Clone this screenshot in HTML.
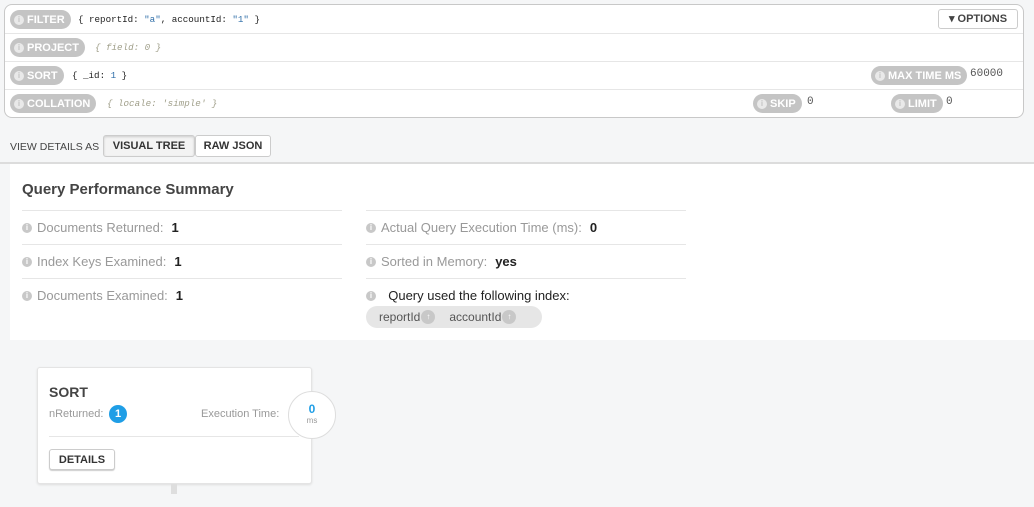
<!DOCTYPE html>
<html><head><style>
*{box-sizing:border-box;margin:0;padding:0}
body{width:1034px;height:507px;background:#f5f6f7;font-family:"Liberation Sans",sans-serif;position:relative;overflow:hidden}
.abs{position:absolute}
.bar{left:4px;top:4px;width:1020px;height:114px;background:#fff;border:1px solid #c8c8c8;border-radius:8px}
.line{position:absolute;height:1px;background:#e6e6e6}
.pill{position:absolute;height:19px;border-radius:10px;background:#c4c4c4;color:#fff;font-weight:bold;font-size:11px;padding:0 6px 0 4px;white-space:nowrap;display:flex;align-items:center}
.pill i{display:block;width:10px;height:10px;border-radius:50%;background:#e9e9e9;color:#c4c4c4;font-style:normal;font-size:8px;line-height:10px;text-align:center;margin-right:3px}
.mono{position:absolute;font-family:"Liberation Mono",monospace;font-size:9.2px;color:#222;white-space:nowrap}
.it{font-style:italic;color:#a09f8a}
.blue{color:#2f6ea8}
.lbl{position:absolute;font-size:13px;color:#999;white-space:nowrap;display:flex;align-items:center}
.lbl b{color:#222;margin-left:8px}
.ic{display:inline-block;width:10px;height:10px;border-radius:50%;background:#c8c8c8;color:#fff;font-size:8px;line-height:10px;text-align:center;font-weight:bold;margin-right:5px}
.btn{position:absolute;border:1px solid #ccc;border-radius:3px;background:#fff;font-size:11px;font-weight:bold;color:#333;text-align:center}
</style></head><body>
<div class="abs bar">
 <div class="line" style="left:0;right:0;top:28px"></div>
 <div class="line" style="left:0;right:0;top:56px"></div>
 <div class="line" style="left:0;right:0;top:84px"></div>
</div>
<div class="pill" style="left:10px;top:10px"><i>i</i>FILTER</div>
<div class="mono" style="left:78px;top:14px">{ reportId: <span class="blue">"a"</span>, accountId: <span class="blue">"1"</span> }</div>
<div class="btn" style="left:938px;top:9px;width:80px;height:20px;line-height:19px;font-size:11px;color:#444">▾ OPTIONS</div>
<div class="pill" style="left:10px;top:38px"><i>i</i>PROJECT</div>
<div class="mono it" style="left:95px;top:42px">{ field: 0 }</div>
<div class="pill" style="left:10px;top:66px"><i>i</i>SORT</div>
<div class="mono" style="left:72px;top:70px">{ _id: <span class="blue">1</span> }</div>
<div class="pill" style="left:871px;top:66px"><i>i</i>MAX TIME MS</div>
<div class="mono" style="left:970px;top:68px;color:#555;font-size:11px">60000</div>
<div class="pill" style="left:10px;top:94px"><i>i</i>COLLATION</div>
<div class="mono it" style="left:107px;top:98px">{ locale: 'simple' }</div>
<div class="pill" style="left:753px;top:94px"><i>i</i>SKIP</div>
<div class="mono" style="left:807px;top:96px;color:#555;font-size:11px">0</div>
<div class="pill" style="left:891px;top:94px"><i>i</i>LIMIT</div>
<div class="mono" style="left:946px;top:96px;color:#555;font-size:11px">0</div>

<div class="abs" style="left:10px;top:141px;font-size:10.5px;color:#444">VIEW DETAILS AS</div>
<div class="btn" style="left:103px;top:135px;width:92px;height:22px;line-height:21px;background:#f3f3f3;box-shadow:inset 0 1px 2px #ccc">VISUAL TREE</div>
<div class="btn" style="left:195px;top:135px;width:76px;height:22px;line-height:21px">RAW JSON</div>
<div class="abs" style="left:0;top:162px;width:1034px;height:2px;background:#dcdcdc"></div>

<div class="abs" style="left:10px;top:164px;width:1024px;height:176px;background:#fff"></div>
<div class="abs" style="left:22px;top:181px;font-size:15px;font-weight:bold;color:#444">Query Performance Summary</div>
<div class="line" style="left:22px;width:320px;top:210px"></div>
<div class="line" style="left:22px;width:320px;top:244px"></div>
<div class="line" style="left:22px;width:320px;top:278px"></div>
<div class="line" style="left:366px;width:320px;top:210px"></div>
<div class="line" style="left:366px;width:320px;top:244px"></div>
<div class="line" style="left:366px;width:320px;top:278px"></div>
<div class="lbl" style="left:22px;top:220px"><span class="ic">i</span>Documents Returned:<b>1</b></div>
<div class="lbl" style="left:22px;top:254px"><span class="ic">i</span>Index Keys Examined:<b>1</b></div>
<div class="lbl" style="left:22px;top:288px"><span class="ic">i</span>Documents Examined:<b>1</b></div>
<div class="lbl" style="left:366px;top:220px"><span class="ic">i</span>Actual Query Execution Time (ms):<b>0</b></div>
<div class="lbl" style="left:366px;top:254px"><span class="ic">i</span>Sorted in Memory:<b>yes</b></div>
<div class="lbl" style="left:366px;top:288px"><span class="ic">i</span>&nbsp;&nbsp; <span style="color:#222">Query used the following index:</span></div>
<div class="abs" style="left:366px;top:306px;width:176px;height:22px;border-radius:11px;background:#e6e6e6;font-size:12px;color:#555;padding-left:13px;display:flex;align-items:center">reportId<span class="ic" style="width:14px;height:14px;line-height:14px;margin:0 14px 0 1px">↑</span>accountId<span class="ic" style="width:14px;height:14px;line-height:14px;margin:0 0 0 1px">↑</span></div>

<div class="abs" style="left:37px;top:367px;width:275px;height:117px;background:#fff;border:1px solid #e4e4e4;border-radius:3px;box-shadow:0 1px 2px #ddd"></div>
<div class="abs" style="left:171px;top:484px;width:6px;height:10px;background:#dedede"></div>
<div class="abs" style="left:49px;top:384px;font-size:14px;font-weight:bold;color:#444">SORT</div>
<div class="abs" style="left:49px;top:408px;font-size:11px;color:#999">nReturned:</div>
<div class="abs" style="left:109px;top:405px;width:18px;height:18px;border-radius:50%;background:#1f9ee6;color:#fff;font-size:11px;line-height:18px;text-align:center;font-weight:bold">1</div>
<div class="abs" style="left:201px;top:408px;font-size:11px;color:#999">Execution Time:</div>
<div class="line" style="left:49px;width:250px;top:436px"></div>
<div class="abs" style="left:288px;top:391px;width:48px;height:48px;border-radius:50%;border:1px solid #ddd;background:#fff;text-align:center"><div style="color:#1f9ee6;font-size:12px;font-weight:bold;margin-top:11px;line-height:13px">0</div><div style="color:#999;font-size:8px;line-height:9px">ms</div></div>
<div class="btn" style="left:49px;top:449px;width:66px;height:21px;line-height:20px;box-shadow:0 1px 1px #ccc">DETAILS</div>
</body></html>
